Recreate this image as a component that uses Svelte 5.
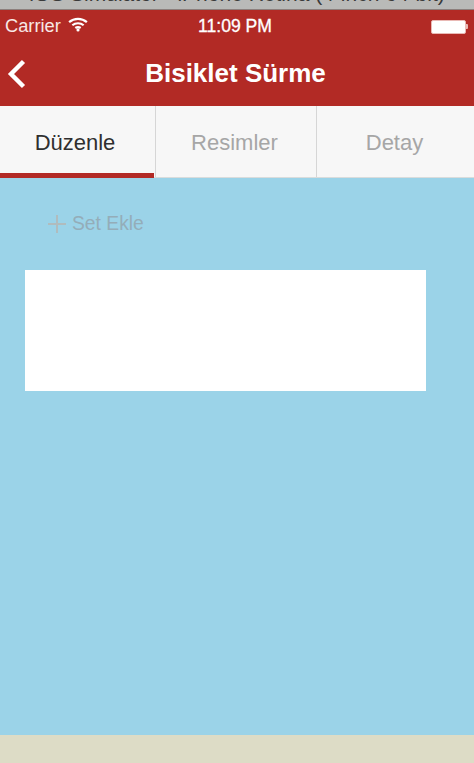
<script>
  const tabs = [
    { label: 'Düzenle', active: true },
    { label: 'Resimler', active: false },
    { label: 'Detay', active: false }
  ];
</script>

<div class="screen">
  <div class="window-title"><span>iOS Simulator - iPhone Retina (4-inch 64-bit)</span></div>
  <header class="header">
    <div class="status">
      <div class="carrier">
        <span>Carrier</span>
        <svg class="wifi" viewBox="0 0 18 13" width="20" height="14.5" aria-hidden="true">
          <path d="M1 4.6C5.6 .6 12.4 .6 17 4.6" />
          <path d="M3.9 7.4C6.8 5 11.2 5 14.1 7.4" />
          <path d="M6.6 9.9C8 8.9 10 8.9 11.4 9.9" />
          <circle cx="9" cy="11.6" r="1.4" />
        </svg>
      </div>
      <div class="time">11:09 PM</div>
      <div class="battery"><div class="cell"></div><div class="nub"></div></div>
    </div>
    <div class="nav">
      <svg class="back" viewBox="0 0 20 32" width="20" height="32" aria-hidden="true">
        <path d="M16.5 3.5 L4 16 L16.5 28.5" />
      </svg>
      <h1>Bisiklet Sürme</h1>
    </div>
  </header>

  <nav class="tabs">
    {#each tabs as tab}
      <div class="tab" class:active={tab.active}>{tab.label}</div>
    {/each}
  </nav>

  <main class="content">
    <div class="add">
      <svg viewBox="0 0 18 18" width="18" height="18" aria-hidden="true">
        <path d="M9 0V18M0 9H18" />
      </svg>
      <span>Set Ekle</span>
    </div>
    <div class="card"></div>
  </main>

  <footer class="footer"></footer>
</div>

<style>
  :global(body) {
    margin: 0;
  }
  .screen {
    width: 474px;
    height: 763px;
    display: flex;
    flex-direction: column;
    overflow: hidden;
    font-family: "Liberation Sans", Arial, sans-serif;
    background: #9bd3e8;
  }
  .window-title {
    height: 9px;
    flex: none;
    background: #b9bab8;
    border-bottom: 1px solid #8c7f7c;
    overflow: hidden;
    text-align: center;
    color: #3a3a3a;
    font-size: 21px;
    line-height: 22px;
  }
  .window-title span {
    display: block;
    margin-top: -17px;
    white-space: nowrap;
  }
  .header {
    height: 96px;
    flex: none;
    background: #b22a25;
    color: #fff;
    display: flex;
    flex-direction: column;
  }
  .status {
    height: 33px;
    flex: none;
    display: grid;
    grid-template-columns: 1fr auto 1fr;
    align-items: center;
    padding: 0 5px;
    font-size: 18.3px;
    color: #f8e8e6;
  }
  .carrier {
    display: flex;
    align-items: center;
    gap: 7px;
    margin-top: -1px;
  }
  .wifi {
    margin-top: -3px;
  }
  .wifi path {
    fill: none;
    stroke: #fff;
    stroke-width: 2;
  }
  .wifi circle {
    fill: #fff;
  }
  .time {
    font-size: 17.6px;
    -webkit-text-stroke: 0.3px #fff;
    color: #fff;
    margin-right: 4px;
  }
  .battery {
    justify-self: end;
    display: flex;
    align-items: center;
    margin-right: 1px;
  }
  .cell {
    width: 33px;
    height: 12px;
    background: #fff;
    border: 1px solid #e9b9b5;
    border-radius: 2px;
  }
  .nub {
    width: 2px;
    height: 5px;
    background: #e9b9b5;
    border-radius: 0 1px 1px 0;
  }
  .nav {
    flex: 1;
    min-height: 0;
    position: relative;
    display: flex;
    align-items: flex-start;
    justify-content: center;
    padding-right: 3px;
  }
  .back {
    position: absolute;
    left: 7px;
    top: 15px;
  }
  .back path {
    fill: none;
    stroke: #fff;
    stroke-width: 4.4;
  }
  h1 {
    margin: 15px 0 0;
    font-size: 26px;
    line-height: 30px;
    font-weight: 700;
  }
  .tabs {
    height: 72px;
    flex: none;
    display: grid;
    grid-template-columns: 156px 161px 1fr;
    background: #f7f7f7;
    border-bottom: 1px solid #d9dcdc;
    box-sizing: border-box;
  }
  .tab {
    display: flex;
    align-items: center;
    justify-content: center;
    box-sizing: border-box;
    padding: 3px 3px 0 0;
    border-right: 1px solid #d6d6d6;
    color: #a6a6a6;
    font-size: 22px;
  }
  .tab:last-child {
    border-right: 0;
    padding-right: 2px;
  }
  .tab.active {
    color: #2f2f2f;
    position: relative;
    padding-right: 5px;
  }
  .tab.active::after {
    content: "";
    position: absolute;
    left: 0;
    right: 1px;
    bottom: -1px;
    height: 5px;
    background: #b22a25;
  }
  .content {
    flex: 1;
    min-height: 0;
    background: #9bd3e8;
    padding: 0 48px 0 25px;
    display: flex;
    flex-direction: column;
  }
  .add {
    display: flex;
    align-items: center;
    gap: 6px;
    margin: 36px 0 0 23px;
    height: 20px;
    color: #94adb9;
    font-size: 19.3px;
  }
  .add svg path {
    fill: none;
    stroke: #b0bcbe;
    stroke-width: 2;
  }
  .card {
    margin-top: 36px;
    height: 121px;
    background: #fff;
  }
  .footer {
    height: 28px;
    flex: none;
    background: #dddcc6;
  }
</style>
